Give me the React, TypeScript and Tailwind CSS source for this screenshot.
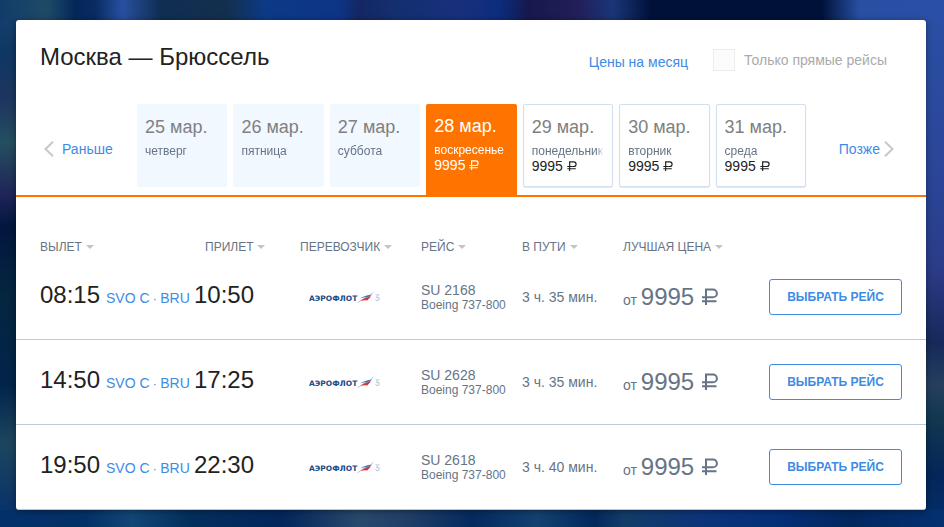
import { useState } from 'react';
import clsx from 'clsx';

const days = [
  { id: 25, weekday: 'четверг', price: null },
  { id: 26, weekday: 'пятница', price: null },
  { id: 27, weekday: 'суббота', price: null },
  { id: 28, weekday: 'воскресенье', price: 9995 },
  { id: 29, weekday: 'понедельник', price: 9995 },
  { id: 30, weekday: 'вторник', price: 9995 },
  { id: 31, weekday: 'среда', price: 9995 },
];

const flights = [
  { departure: '08:15', arrival: '10:50', number: 'SU 2168', duration: '3 ч. 35 мин.' },
  { departure: '14:50', arrival: '17:25', number: 'SU 2628', duration: '3 ч. 35 мин.' },
  { departure: '19:50', arrival: '22:30', number: 'SU 2618', duration: '3 ч. 40 мин.' },
];

const columns = [
  { title: 'ВЫЛЕТ', className: 'w-[178px] pl-6' },
  { title: 'ПРИЛЕТ', className: 'w-[106px] pl-[11px]' },
  { title: 'ПЕРЕВОЗЧИК', className: 'w-[121px]' },
  { title: 'РЕЙС', className: 'w-[101px]' },
  { title: 'В ПУТИ', className: 'w-[101px]' },
  { title: 'ЛУЧШАЯ ЦЕНА', className: 'w-[130px]' },
];

function Ruble({ className }: { className?: string }) {
  return (
    <svg viewBox="0 0 16 17" className={clsx('inline-block', className)} fill="none" stroke="currentColor" strokeWidth="2" role="img" aria-label="руб.">
      <path d="M4 17V1.5h7a3.9 3.9 0 0 1 0 7.8H0M0 13.2h14.5" />
    </svg>
  );
}

function Chevron({ flip }: { flip?: boolean }) {
  return (
    <svg viewBox="0 0 10 16" className="h-4 w-[10px]" fill="none" stroke="#c8c8c8" strokeWidth="2">
      <path d={flip ? 'M1 .7L8.5 8L1 15.3' : 'M9 .7L1.5 8L9 15.3'} />
    </svg>
  );
}

function CarrierLogo() {
  return (
    <svg viewBox="0 0 72 12" className="ml-[9px] h-3 w-[72px]" role="img" aria-label="Аэрофлот">
      <text x="0" y="10" fontSize="7.5" fontWeight="700" fontFamily="'DejaVu Sans', sans-serif" fill="#1d4a86">
        АЭРОФЛОТ
      </text>
      <path d="M51 7.6C54 5.2 58 3.9 63 3.4L60 6.6C57 6 54 6.5 51 7.6Z" fill="#3f78c0" />
      <path d="M51.5 10.2C54.5 7 58 5.8 62 5.6L58.2 9.6C56 9 54 9.4 51.5 10.2Z" fill="#e0302c" />
      <path d="M48.5 12C52.5 8.5 57 6.6 60 5.6L64.2 1.2" fill="none" stroke="#8b93b5" strokeWidth=".6" />
      <path d="M66.6 3.4l2 .8 1.8-.6M68.6 4.2l-1 2.2 2.6.4-.4 2.4-2.2.4-1-1.6" fill="none" stroke="#a9b4d6" strokeWidth=".8" />
    </svg>
  );
}

export default function App() {
  const [selected, setSelected] = useState(28);
  const [directOnly, setDirectOnly] = useState(false);

  return (
    <div className="min-h-screen pt-5 pr-[18px] pb-[17px] pl-4 font-['Liberation_Sans',Arial,sans-serif] [background:linear-gradient(90deg,#123c68_0%,#1f4a66_5%,#02285a_8%,#082a60_10%,#2850a0_13%,#102e52_17%,#142f4e_24%,#0c3a86_28%,#0e3486_36%,#142764_38%,#142f70_42%,#18307c_49%,#0c2c7c_53%,#16184c_56%,#221e58_61%,#1a3578_65%,#001138_69%,#001138_87%,#284fa2_91%,#2a50a6_100%)_top/100%_20px_no-repeat,linear-gradient(90deg,#04306a_0%,#033166_9%,#124676_14%,#032f5c_20%,#03265c_30%,#28486c_38%,#203f68_43%,#042a5e_50%,#124170_57%,#03285c_63%,#123c68_66%,#0c3478_74%,#043078_82%,#02275e_90%,#043070_100%)_bottom/100%_17px_no-repeat,linear-gradient(180deg,#194270_0%,#0e3764_10%,#1e355e_19%,#244f60_27%,#1e2458_37%,#02163e_43%,#05263e_56%,#02244a_73%,#1d455e_84%,#042e6c_100%)_left/50%_100%_no-repeat,linear-gradient(180deg,#2a50a4_0%,#2a4698_33%,#2b3b88_51%,#15295a_65%,#263f5e_73%,#123850_79%,#03265a_90%,#03306c_100%)_right/50%_100%_no-repeat]">
      <main className="rounded-[3px] border-b border-[#b6cadb] bg-white shadow-[0_1px_6px_rgba(0,0,0,0.4)]">
        <header className="flex h-[84px] items-start px-6 pt-[22px] text-sm">
          <h1 className="flex-1 text-2xl leading-[30px] text-[#222]">Москва — Брюссель</h1>
          <a href="#month" className="mt-2 mr-[25px] leading-6 text-[#3e8be4]">Цены на месяц</a>
          <label className="mt-[7px] mr-[15px] flex items-center gap-[9px] text-[#aaa]">
            <input
              type="checkbox"
              checked={directOnly}
              onChange={(e) => setDirectOnly(e.target.checked)}
              className="size-[22px] appearance-none border border-[#ececec] bg-[#fcfcfc] checked:bg-[#3e8be4]"
            />
            Только прямые рейсы
          </label>
        </header>

        <nav className="flex items-center border-b-2 border-[#ff7300] px-6 text-sm text-[#3e8be4]">
          <button type="button" className="flex w-[97px] items-center gap-2 pb-[2px] pl-1">
            <Chevron />
            Раньше
          </button>
          <div className="grid h-[91px] flex-1 grid-cols-7 items-start gap-[6px]">
            {days.map((day) => {
              const active = day.id === selected;
              return (
                <button
                  key={day.id}
                  type="button"
                  onClick={() => setSelected(day.id)}
                  className={clsx(
                    'flex flex-col rounded-xs px-2 text-left',
                    active && 'h-[91px] rounded-b-none bg-[#ff7300] pt-[10px] text-white',
                    !active && day.price && 'h-[83px] border border-[#cfdfef] pt-[10px] shadow-[0_1px_1px_#dfe9f3]',
                    !active && !day.price && 'h-[83px] bg-[#f1f8ff] pt-[11px]',
                  )}
                >
                  <span className={clsx('text-lg leading-6', !active && 'text-[#808080]')}>{day.id} мар.</span>
                  <span
                    className={clsx(
                      'w-full overflow-hidden text-xs leading-6 whitespace-nowrap [mask-image:linear-gradient(to_left,transparent,black_8px)]',
                      !active && 'text-[#667486]',
                    )}
                  >
                    {day.weekday}
                  </span>
                  {day.price && (
                    <span className={clsx('-mt-[5px] leading-4', !active && 'text-[#222]')}>
                      {day.price} <Ruble className="h-[10px] w-[10px] align-baseline" />
                    </span>
                  )}
                </button>
              );
            })}
          </div>
          <button type="button" className="flex w-24 items-center justify-end gap-1 pr-2 pb-[2px]">
            Позже
            <Chevron flip />
          </button>
        </nav>

        <table className="w-full table-fixed border-separate border-spacing-0 text-left text-sm text-[#667486]">
          <thead>
            <tr>
              {columns.map((column) => (
                <th key={column.title} scope="col" className={clsx('pt-[42px] text-xs leading-4 font-normal', column.className)}>
                  <button type="button" className="flex items-center gap-1 whitespace-nowrap">
                    {column.title}
                    <svg viewBox="0 0 8 4" className="h-1 w-2" fill="#c4c4c4">
                      <path d="M0 0h8L4 4z" />
                    </svg>
                  </button>
                </th>
              ))}
              <td />
            </tr>
          </thead>
          <tbody>
            {flights.map((flight) => (
              <tr key={flight.number} className="h-[85px] *:border-b *:border-[#bccad6] last:h-[84px] last:*:border-b-0">
                <td className="pb-1 pl-6 whitespace-nowrap">
                  <span className="text-2xl text-[#222]">{flight.departure}</span>{' '}
                  <a href="#airports" className="ml-[2px] text-[#3e8be4]">
                    SVO C<span className="text-xs"> · </span>BRU
                  </a>
                </td>
                <td className="pb-1 text-2xl text-[#222]">{flight.arrival}</td>
                <td>
                  <CarrierLogo />
                </td>
                <td>
                  <div className="leading-4">{flight.number}</div>
                  <div className="text-xs leading-[14px]">Boeing 737-800</div>
                </td>
                <td>{flight.duration}</td>
                <td className="whitespace-nowrap">
                  от <span className="text-2xl">9995</span>
                  <Ruble className="ml-2 h-[17px] w-4 align-baseline" />
                </td>
                <td className="pr-6 text-right">
                  <button type="button" className="h-9 w-[133px] rounded-[3px] border border-[#3e8be4] text-xs font-bold text-[#3e8be4]">
                    ВЫБРАТЬ РЕЙС
                  </button>
                </td>
              </tr>
            ))}
          </tbody>
        </table>
      </main>
    </div>
  );
}
